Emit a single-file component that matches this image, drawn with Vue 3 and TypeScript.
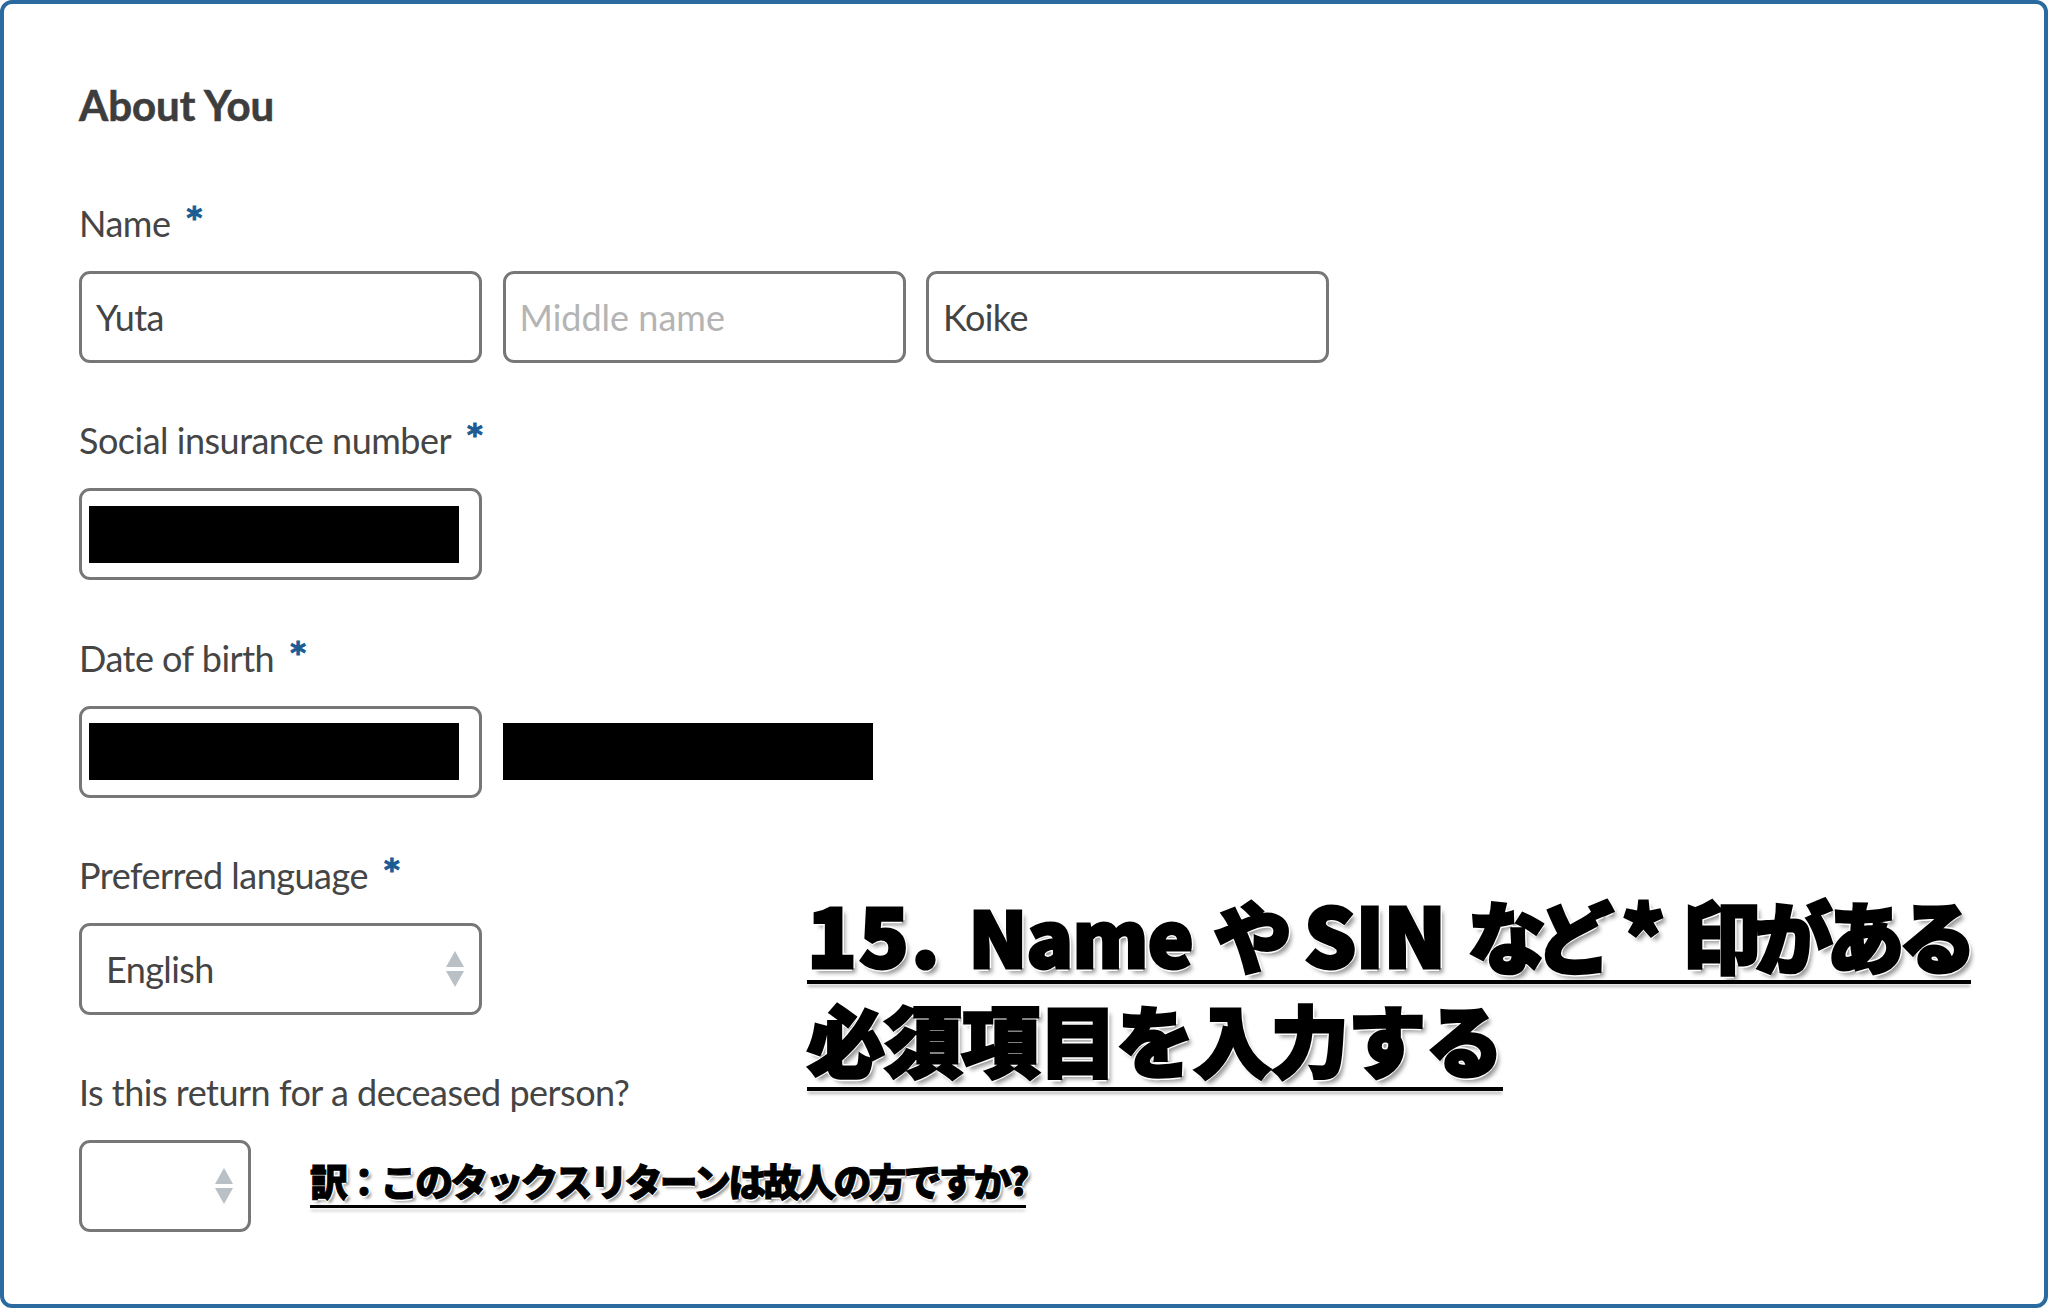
<script setup lang="ts">
interface Row { label: string; required: boolean }
const rows: Row[] = [
  { label: 'Name', required: true },
  { label: 'Social insurance number', required: true },
  { label: 'Date of birth', required: true },
  { label: 'Preferred language', required: true },
  { label: 'Is this return for a deceased person?', required: false },
]
</script>

<template>
  <main class="card">
    <h2 class="title">About You</h2>

    <section class="group">
      <div class="label">{{ rows[0].label }}<span class="req">*</span></div>
      <div class="row">
        <div class="field">Yuta</div>
        <div class="field placeholder">Middle name</div>
        <div class="field">Koike</div>
      </div>
    </section>

    <section class="group">
      <div class="label">{{ rows[1].label }}<span class="req">*</span></div>
      <div class="row">
        <div class="field masked"><div class="redact"></div></div>
      </div>
    </section>

    <section class="group">
      <div class="label">{{ rows[2].label }}<span class="req">*</span></div>
      <div class="row">
        <div class="field masked"><div class="redact"></div></div>
        <div class="redact"></div>
      </div>
    </section>

    <section class="group">
      <div class="label">{{ rows[3].label }}<span class="req">*</span></div>
      <div class="row">
        <div class="field select">
          <span>English</span>
          <svg class="updown" width="20" height="36" viewBox="0 0 20 36"><path d="M10 0 19 16H1Z M1 20H19L10 36Z" fill="#b9c0c6" /></svg>
        </div>
      </div>
    </section>

    <section class="group">
      <div class="label">{{ rows[4].label }}</div>
      <div class="row">
        <div class="field select small">
          <span></span>
          <svg class="updown" width="20" height="36" viewBox="0 0 20 36"><path d="M10 0 19 16H1Z M1 20H19L10 36Z" fill="#b9c0c6" /></svg>
        </div>
      </div>
    </section>

    <div class="note big">
      <div class="line"><span class="ul"><span class="lat num">15. </span><span class="lat word">Name </span><span class="cjk ya">や</span><span class="lat"> SIN </span><span class="cjk tight">など</span><span class="lat"> * </span><span class="cjk">印がある</span></span></div>
      <div class="line"><span class="ul">必須項目を入力する</span></div>
    </div>
    <div class="note small-note"><span class="ul">訳：このタックスリターンは故人の方ですか?</span></div>
  </main>
</template>

<style scoped>
.card {
  position: relative;
  box-sizing: border-box;
  width: 2048px;
  height: 1308px;
  border: 4px solid #2a6a9f;
  border-radius: 12px;
  padding: 0 75px;
  background: #fff;
  color: #3f3f3f;
  font-family: "Lato", "Noto Sans", sans-serif;
  overflow: hidden;
}
.title {
  margin: 0;
  padding-top: 71px;
  height: 60px;
  font-size: 42px;
  line-height: 60px;
  font-weight: 700;
  color: #3d3d3d;
  -webkit-text-stroke: 0.6px #3d3d3d;
}
.group { height: 217.3px; }
.title + .group { margin-top: 64px; }
.label {
  display: flex;
  height: 49px;
  margin-bottom: 23px;
  font-size: 36px;
  line-height: 49px;
  letter-spacing: -0.5px;
  color: #454545;
}
.req {
  margin-left: 16px;
  font-family: "DejaVu Sans", sans-serif;
  font-weight: 700;
  font-size: 30px;
  line-height: 37px;
  letter-spacing: 0;
  color: #1c5c92;
  -webkit-text-stroke: 1px #1c5c92;
}
.row { display: flex; gap: 20.5px; align-items: center; }
.field {
  box-sizing: border-box;
  display: flex;
  align-items: center;
  width: 403px;
  height: 92px;
  padding: 0 14px;
  border: 3px solid #777;
  border-radius: 11px;
  font-size: 36px;
  letter-spacing: -0.6px;
  color: #444;
  background: #fff;
}
.placeholder { color: #b4b4b4; letter-spacing: 0; }
.masked { padding: 0 20px 0 7px; }
.redact { width: 370px; height: 57px; background: #000; flex: none; }
.select { justify-content: space-between; padding: 0 14px 0 24px; }
.select.small { width: 172px; }
.updown { flex: none; }
.note {
  position: absolute;
  color: #000;
  font-family: "Noto Sans CJK JP", "Noto Sans", sans-serif;
  font-weight: 900;
  white-space: nowrap;
}
.big {
  left: 803px;
  top: 885px;
  font-size: 78px;
  -webkit-text-stroke: 3px #000;
  text-shadow: 3px 0 0 #fff, -3px 0 0 #fff, 0 3px 0 #fff, 0 -3px 0 #fff, 4px 5px 4px #999;
}
.line { height: 88px; line-height: 88px; margin-bottom: 17px; letter-spacing: -0.7px; }
.lat { font-size: 82px; white-space: pre; }
.num { letter-spacing: 2px; word-spacing: 6px; }
.word { font-size: 77px; }
.cjk { letter-spacing: -6px; }
.ya { margin-left: 4px; }
.tight { margin-left: 4px; letter-spacing: -10px; }
.small-note {
  left: 306px;
  top: 1150px;
  font-size: 38px;
  line-height: 52px;
  letter-spacing: -2.9px;
  -webkit-text-stroke: 1px #000;
  text-shadow: 2px 0 0 #fff, -2px 0 0 #fff, 0 2px 0 #fff, 0 -2px 0 #fff, 3px 3px 3px #999;
}
.ul {
  position: relative;
  display: inline-block;
  height: 100%;
}
.ul::after {
  content: "";
  position: absolute;
  left: 0;
  right: 0;
  bottom: -7px;
  height: 4px;
  background: #000;
  box-shadow: 0 4px 3px -1px #aaa;
}
.line + .line .ul::after { bottom: -9px; }
.small-note .ul::after { height: 3px; bottom: -2px; }
</style>
